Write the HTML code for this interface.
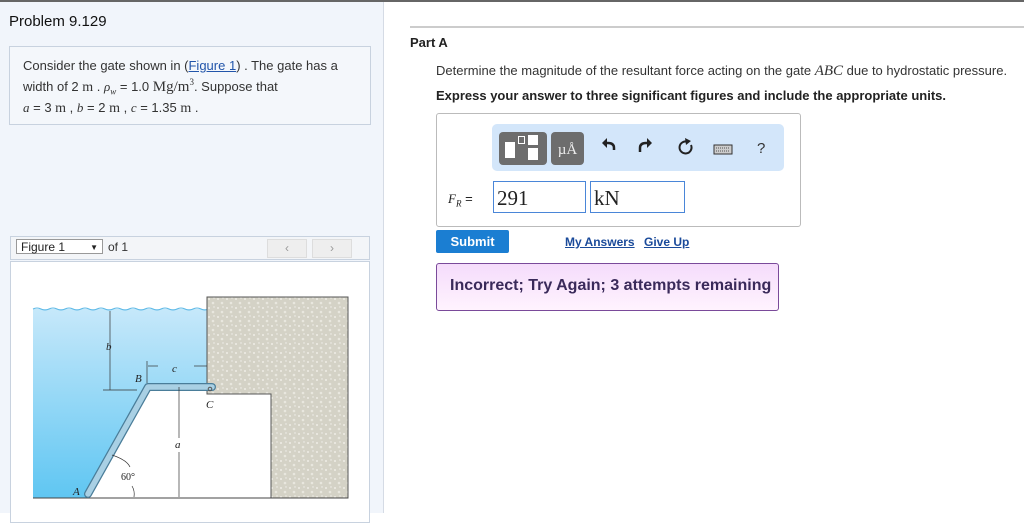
<!DOCTYPE html>
<html><head><style>
body{margin:0;width:1024px;height:513px;overflow:hidden;font-family:"Liberation Sans",Arial,sans-serif;background:#fff;position:relative}
.abs{position:absolute}
.left{left:0;top:0;width:383px;height:513px;background:#f1f5fb;border-right:1px solid #d5dbe5}
.m{font-family:"Liberation Serif",serif;font-style:italic}
.r{font-family:"Liberation Serif",serif}
</style></head><body>
<div class="abs left"></div>
<div class="abs" style="left:0;top:0;width:1024px;height:2px;background:#666"></div>
<div class="abs" style="left:9px;top:13px;font-size:15px;color:#111">Problem 9.129</div>
<div class="abs" style="left:9px;top:46px;width:360px;height:77px;border:1px solid #c8d2df;background:#f4f7fb"></div>
<div class="abs" style="left:23px;top:58px;font-size:13px;line-height:16px;color:#333;white-space:nowrap">Consider the gate shown in (<span style="color:#2255aa;text-decoration:underline">Figure 1</span>) . The gate has a<br>width of 2 <span class="r" style="font-size:14px">m</span> . <span class="m">ρ<sub style="font-size:9px">w</sub></span> = 1.0 <span class="r" style="font-size:15px">Mg/m<sup style="font-size:9px">3</sup></span>. Suppose that<br><span class="m">a</span> = 3 <span class="r" style="font-size:14px">m</span> , <span class="m">b</span> = 2 <span class="r" style="font-size:14px">m</span> , <span class="m">c</span> = 1.35 <span class="r" style="font-size:14px">m</span> .</div>

<div class="abs" style="left:10px;top:236px;width:358px;height:22px;border:1px solid #c8d2df;background:#f3f5f8"></div>
<div class="abs" style="left:16px;top:239px;width:87px;height:15px;border:1px solid #999;background:#fff;font-size:12px;line-height:15px;color:#222;padding-left:4px;box-sizing:border-box">Figure 1<span style="position:absolute;right:4px;font-size:8px">▼</span></div>
<div class="abs" style="left:108px;top:240px;font-size:12px;color:#333">of 1</div>
<div class="abs" style="left:267px;top:239px;width:38px;height:17px;border:1px solid #ddd;background:#eee;color:#999;text-align:center;font-size:12px;line-height:17px">‹</div>
<div class="abs" style="left:312px;top:239px;width:38px;height:17px;border:1px solid #ddd;background:#eee;color:#999;text-align:center;font-size:12px;line-height:17px">›</div>
<div class="abs" style="left:10px;top:261px;width:358px;height:260px;border:1px solid #c8d2df;background:#fff"></div>
<svg class="abs" style="left:0;top:0" width="383" height="513">
<defs><linearGradient id="w" x1="0" y1="0" x2="0" y2="1"><stop offset="0" stop-color="#c6e8fa"/><stop offset="1" stop-color="#5fc6f2"/></linearGradient>
<pattern id="c" width="9" height="9" patternUnits="userSpaceOnUse"><rect width="9" height="9" fill="#d4d2c6"/><circle cx="2" cy="2" r="1" fill="#eeede6"/><circle cx="6" cy="6" r="1.3" fill="#e8e7de"/><circle cx="7" cy="1" r=".7" fill="#f2f1ec"/></pattern></defs>
<rect x="33" y="309" width="175" height="189" fill="url(#w)"/>
<path d="M33 309 q4 -2 8 0 t8 0 t8 0 t8 0 t8 0 t8 0 t8 0 t8 0 t8 0 t8 0 t8 0 t8 0 t8 0 t8 0 t8 0 t8 0 t8 0 t8 0 t8 0 t8 0 t8 0 t7 0" stroke="#5bb8e6" fill="none"/>
<path d="M88 498 L148 390 L207 390 L207 394 L271 394 L271 498Z" fill="#fff"/>
<path d="M207 297 H348 V498 H271 V394 H207Z" fill="url(#c)" stroke="#555"/>
<line x1="33" y1="498" x2="348" y2="498" stroke="#444"/>
<path d="M88 494 L148 387 L212 387" stroke="#4a7d99" stroke-width="8" fill="none" stroke-linecap="round" stroke-linejoin="round"/>
<path d="M88 494 L148 387 L212 387" stroke="#a9d0e4" stroke-width="5.5" fill="none" stroke-linecap="round" stroke-linejoin="round"/>
<circle cx="210" cy="389" r="1.8" fill="none" stroke="#555"/>
<g stroke="#333" stroke-width=".7"><line x1="110" y1="311" x2="110" y2="390"/><line x1="103" y1="390" x2="137" y2="390"/><line x1="147" y1="361" x2="147" y2="383"/><line x1="148" y1="366" x2="158" y2="366"/><line x1="194" y1="366" x2="207" y2="366"/><line x1="179" y1="387" x2="179" y2="438"/><line x1="179" y1="452" x2="179" y2="497"/><path d="M112 455 q15 5 18 12" fill="none"/><path d="M132 486 q3 5 2 11" fill="none"/></g>
<g font-family="Liberation Serif,serif" font-style="italic" font-size="11" fill="#222"><text x="106" y="350">b</text><text x="172" y="372">c</text><text x="135" y="382">B</text><text x="206" y="408">C</text><text x="175" y="448">a</text><text x="73" y="495">A</text></g>
<text x="121" y="480" font-family="Liberation Serif,serif" font-size="10" fill="#222">60°</text>
</svg>

<div class="abs" style="left:410px;top:26px;width:614px;height:2px;background:#ccc"></div>
<div class="abs" style="left:410px;top:35px;font-size:13px;font-weight:bold;color:#222">Part A</div>
<div class="abs" style="left:436px;top:63px;font-size:13px;color:#333;white-space:nowrap">Determine the magnitude of the resultant force acting on the gate <span class="m" style="font-size:15px">ABC</span> due to hydrostatic pressure.</div>
<div class="abs" style="left:436px;top:88px;font-size:13px;font-weight:bold;color:#222;white-space:nowrap">Express your answer to three significant figures and include the appropriate units.</div>
<div class="abs" style="left:436px;top:113px;width:363px;height:112px;border:1px solid #bbb;border-radius:3px"></div>
<div class="abs" style="left:492px;top:124px;width:292px;height:47px;background:#d3e6fa;border-radius:5px"></div>
<div class="abs" style="left:499px;top:132px;width:48px;height:33px;background:#6d6d6d;border-radius:4px"></div>
<div class="abs" style="left:505px;top:142px;width:10px;height:16px;background:#fff"></div>
<div class="abs" style="left:518px;top:136px;width:5px;height:6px;border:1px solid #fff"></div>
<div class="abs" style="left:528px;top:135px;width:10px;height:10px;background:#fff"></div>
<div class="abs" style="left:528px;top:148px;width:10px;height:12px;background:#fff"></div>
<div class="abs" style="left:551px;top:132px;width:33px;height:33px;background:#6d6d6d;border-radius:4px;color:#eee;font-family:'Liberation Serif',serif;font-size:15px;text-align:center;line-height:36px">µÅ</div>
<svg class="abs" style="left:600px;top:136px" width="140" height="26">
<path d="M14 14 V12 Q14 7 8 7 H5" stroke="#222" stroke-width="2.5" fill="none"/><path d="M2 7 L7 2 V12Z" fill="#222"/>
<path d="M40 16 V12 Q40 7 46 7 H49" stroke="#222" stroke-width="2.5" fill="none"/><path d="M52 7 L47 2 V12Z" fill="#222"/>
<path d="M88 6 A6 6 0 1 0 91 9" stroke="#222" stroke-width="2" fill="none"/><path d="M85 2 L91 5 L86 9Z" fill="#222"/>
<rect x="114" y="9" width="18" height="9" fill="#ccc" stroke="#333"/><path d="M116 12h14M116 15h14" stroke="#555" stroke-dasharray="1 1"/>
</svg>
<div class="abs" style="left:757px;top:140px;font-size:15px;color:#333">?</div>
<div class="abs" style="left:448px;top:191px;font-size:13px;color:#222"><span class="m">F<sub style="font-size:9px">R</sub></span> =</div>
<div class="abs" style="left:493px;top:181px;width:93px;height:32px;border:1px solid #4a86d8;font-family:'Liberation Serif',serif;font-size:21px;line-height:32px;padding-left:3px;box-sizing:border-box;color:#222">291</div>
<div class="abs" style="left:590px;top:181px;width:95px;height:32px;border:1px solid #4a86d8;font-family:'Liberation Serif',serif;font-size:21px;line-height:32px;padding-left:3px;box-sizing:border-box;color:#222">kN</div>
<div class="abs" style="left:436px;top:230px;width:73px;height:23px;background:#1b7ed2;border-radius:2px;color:#fff;font-weight:bold;font-size:13px;text-align:center;line-height:23px">Submit</div>
<div class="abs" style="left:565px;top:235px;font-size:12px;font-weight:bold;color:#1a4a9a;text-decoration:underline">My Answers</div>
<div class="abs" style="left:644px;top:235px;font-size:12px;font-weight:bold;color:#1a4a9a;text-decoration:underline">Give Up</div>
<div class="abs" style="left:436px;top:263px;width:341px;height:46px;border:1px solid #7a4a9a;border-radius:3px;background:linear-gradient(#f5dcfb,#fff3fe)"></div>
<div class="abs" style="left:450px;top:277px;font-size:16px;font-weight:bold;color:#3a2a5a;white-space:nowrap">Incorrect; Try Again; 3 attempts remaining</div>
</body></html>
